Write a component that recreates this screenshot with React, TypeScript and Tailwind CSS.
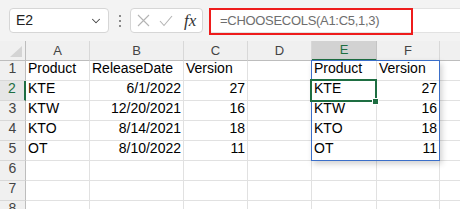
import { ChevronDown } from "lucide-react"

const cols = [
  { key: "A", w: "w-[64px]" },
  { key: "B", w: "w-[94px]" },
  { key: "C", w: "w-[64px]" },
  { key: "D", w: "w-[64px]" },
  { key: "E", w: "w-[65px]" },
  { key: "F", w: "w-[63px]" },
]

type Cell = { v: string; right?: boolean }

const rows: Cell[][] = [
  [{ v: "Product" }, { v: "ReleaseDate" }, { v: "Version" }, { v: "" }, { v: "Product" }, { v: "Version" }],
  [{ v: "KTE" }, { v: "6/1/2022", right: true }, { v: "27", right: true }, { v: "" }, { v: "KTE" }, { v: "27", right: true }],
  [{ v: "KTW" }, { v: "12/20/2021", right: true }, { v: "16", right: true }, { v: "" }, { v: "KTW" }, { v: "16", right: true }],
  [{ v: "KTO" }, { v: "8/14/2021", right: true }, { v: "18", right: true }, { v: "" }, { v: "KTO" }, { v: "18", right: true }],
  [{ v: "OT" }, { v: "8/10/2022", right: true }, { v: "11", right: true }, { v: "" }, { v: "OT" }, { v: "11", right: true }],
  [],
  [],
  [],
]

const Toolbar = () => (
  <div className="h-[41px] bg-[#f3f3f3] flex items-start pt-[8px] pl-[9px]">
    <div className="w-[100px] h-[25px] bg-white border border-[#d6d6d6] rounded-[4px] flex items-center justify-between pl-[6px] pr-[5px]">
      <span className="text-[14px] text-[#222]">E2</span>
      <ChevronDown size={14} strokeWidth={1.8} className="text-[#444]" />
    </div>
    <div className="w-[21px] h-[25px] flex flex-col items-center justify-center gap-[3px]">
      <div className="w-[2px] h-[2px] bg-[#8a8a8a]" />
      <div className="w-[2px] h-[2px] bg-[#8a8a8a]" />
      <div className="w-[2px] h-[2px] bg-[#8a8a8a]" />
    </div>
    <div className="w-[73px] h-[25px] bg-white border border-[#d6d6d6] rounded-[4px] flex items-center pl-[6px]">
      <svg width="13" height="13" viewBox="0 0 13 13" className="mr-[9px]">
        <path d="M1 1 L12 12 M12 1 L1 12" stroke="#b4b4b4" strokeWidth="1.1" fill="none" />
      </svg>
      <svg width="14" height="12" viewBox="0 0 14 12" className="mr-[11px]">
        <path d="M1 6 L5 10.5 L13 1" stroke="#b4b4b4" strokeWidth="1.1" fill="none" />
      </svg>
      <span className="text-[17px] italic text-[#333] leading-none" style={{ fontFamily: '"Liberation Serif", serif' }}>
        fx
      </span>
    </div>
    <div className="ml-[6px] flex-1 h-[25px] bg-white border-y border-l border-[#e2e2e2] rounded-l-[4px] relative">
      <div className="absolute left-[-1px] top-[-1px] w-[204px] h-[27px] border-2 border-[#ee1c1c]" />
      <div className="h-full flex items-center pl-[10px] text-[13px] tracking-[-0.3px] text-[#6e6e6e]">
        =CHOOSECOLS(A1:C5,1,3)
      </div>
    </div>
  </div>
)

const HeaderRow = () => (
  <div className="flex h-[20px] bg-[#f0f0f0]">
    <div className="w-[26px] h-full border-r border-b border-[#bdbdbd] relative">
      <svg width="12" height="11" viewBox="0 0 12 11" className="absolute right-[3px] bottom-[3px]">
        <polygon points="12,0 12,11 0,11" fill="#d4d4d4" />
      </svg>
    </div>
    {cols.map((c) => {
      const sel = c.key === "E"
      return (
        <div
          key={c.key}
          className={
            sel
              ? `${c.w} h-full bg-[#d2d2d2] border-r border-[#c4c4c4] border-b-2 border-b-[#1e6e42] flex items-center justify-center text-[13px] text-[#1e6e42]`
              : `${c.w} h-full border-r border-b border-[#d8d8d8] border-b-[#bdbdbd] flex items-center justify-center text-[13px] text-[#444]`
          }
        >
          {c.key}
        </div>
      )
    })}
    <div className="flex-1 h-full border-b border-[#bdbdbd]" />
  </div>
)

const Row = ({ n, cells }: { n: number; cells: Cell[] }) => {
  const active = n === 2
  return (
    <div className="flex h-[20px]">
      <div
        className={
          active
            ? "w-[26px] h-full bg-[#e6e6e6] border-b border-[#d8d8d8] border-r-2 border-r-[#1e6e42] flex items-end justify-center pb-[1px] text-[14px] text-[#1e6e42]"
            : "w-[26px] h-full bg-[#f0f0f0] border-b border-[#d8d8d8] border-r border-r-[#bdbdbd] flex items-end justify-center pb-[1px] text-[14px] text-[#444]"
        }
      >
        {n}
      </div>
      {cols.map((c, i) => {
        const cell = cells[i]
        return (
          <div
            key={c.key}
            className={`${c.w} h-full border-r border-b border-[#e1e1e1] flex items-end pb-[1px] px-[2px] text-[14px] text-black whitespace-nowrap overflow-hidden ${
              cell?.right ? "justify-end" : "justify-start"
            }`}
          >
            {cell?.v}
          </div>
        )
      })}
      <div className="flex-1 h-full border-b border-[#e1e1e1]" />
    </div>
  )
}

export default function App() {
  return (
    <div
      className="w-[460px] h-[209px] overflow-hidden bg-white"
      style={{ fontFamily: '"Liberation Sans", Arial, sans-serif' }}
    >
      <Toolbar />
      <div className="relative">
        <HeaderRow />
        {rows.map((cells, i) => (
          <Row key={i} n={i + 1} cells={cells} />
        ))}
        <div className="absolute left-[311px] top-[19px] w-[129px] h-[101px] border border-[#3b6fc9] shadow-[2px_3px_6px_rgba(0,0,0,0.18)] pointer-events-none" />
        <div className="absolute left-[310px] top-[38px] w-[67px] h-[23px] border-2 border-[#1e6e42] pointer-events-none" />
        <div className="absolute left-[372px] top-[57px] w-[7px] h-[7px] bg-[#1e6e42] border border-white pointer-events-none" />
      </div>
    </div>
  )
}
